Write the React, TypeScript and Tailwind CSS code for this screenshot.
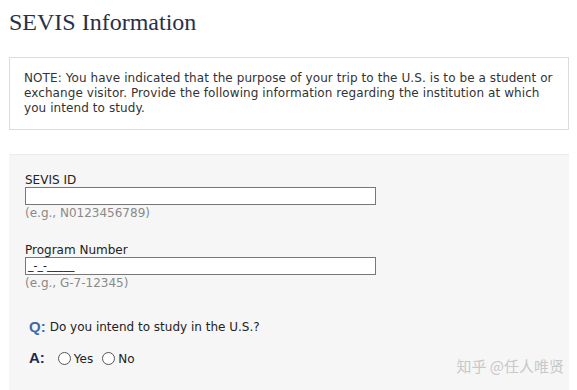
import React from 'react';

const sans = "font-['DejaVu_Sans',Verdana,sans-serif]";

function Field({ label, hint, value }: { label: string; hint: string; value?: string }) {
  return (
    <div className="flex flex-col">
      <label className="text-[12px] leading-[14px] text-[#222]">{label}</label>
      <div className="w-[351px] h-[18px] border border-[#777] bg-white px-[2px] text-[11px] leading-[16px] text-black">
        {value}
      </div>
      <span className="text-[12px] leading-[16px] text-[#8a8a8a]">{hint}</span>
    </div>
  );
}

function Radio({ label }: { label: string }) {
  return (
    <span className="flex items-center gap-[3px]">
      <span className="w-[13px] h-[13px] rounded-full border border-[#555] bg-white" />
      <span>{label}</span>
    </span>
  );
}

export default function App() {
  return (
    <div className={`w-[577px] h-[390px] bg-white overflow-hidden ${sans}`}>
      <h1 className="pl-[9px] pt-[7px] text-[24px] leading-[30px] text-[#2a2f4a] font-['Liberation_Serif',serif]">
        SEVIS Information
      </h1>

      <div className="mx-[9px] mt-[20px] w-[560px] border border-[#dcdcdc] px-[14px] pt-[13px] pb-[13px] text-[12px] leading-[15px] tracking-[0.08px] text-[#333]">
        NOTE: You have indicated that the purpose of your trip to the U.S. is to be a student or exchange visitor.
        Provide the following information regarding the institution at which you intend to study.
      </div>

      <div className="ml-[9px] mt-[24px] w-[560px] h-[240px] bg-[#f6f6f6] border-t border-[#ececec] pl-[16px] pt-[18px]">
        <div className="flex flex-col gap-[22px]">
          <Field label="SEVIS ID" hint="(e.g., N0123456789)" />
          <Field label="Program Number" hint="(e.g., G-7-12345)" value="_-_-_____" />
        </div>

        <div className="mt-[25px] ml-[4px] flex items-center text-[12px] text-[#222]">
          <span className="text-[15px] font-bold text-[#3f6aa8] font-['Liberation_Sans',Arial,sans-serif] mr-[4px]">Q:</span>
          <span>Do you intend to study in the U.S.?</span>
        </div>

        <div className="mt-[8px] ml-[4px] flex items-start text-[12px] text-[#222]">
          <span className="text-[15px] font-bold text-[#1e2a4a] font-['Liberation_Sans',Arial,sans-serif] mr-[13px]">A:</span>
          <div className="mt-[3px] flex items-center gap-[9px]">
            <Radio label="Yes" />
            <Radio label="No" />
          </div>
          <span className="ml-auto mr-[5px] mt-[8px] text-[15px] text-[#c8c8c8] font-['Noto_Sans_CJK_SC',sans-serif]">
            知乎 @任人唯贤
          </span>
        </div>
      </div>
    </div>
  );
}
